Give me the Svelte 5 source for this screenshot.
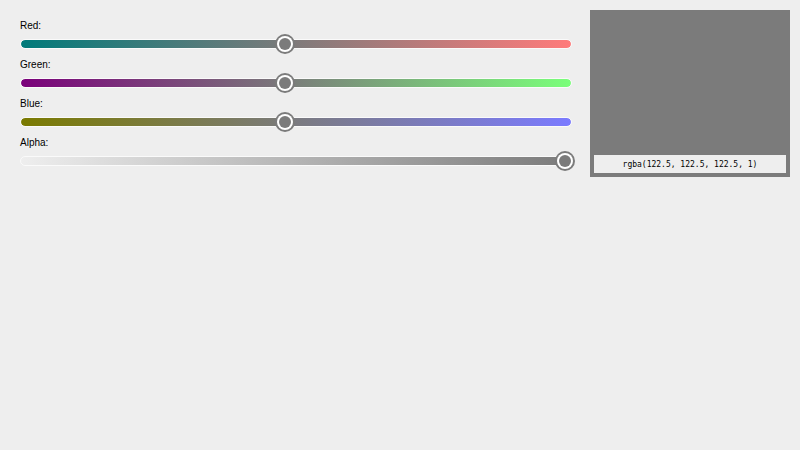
<script lang="ts">
  let color = $state({ red: 122.5, green: 122.5, blue: 122.5, alpha: 1 });

  const channels = [
    { key: "red", label: "Red", max: 255 },
    { key: "green", label: "Green", max: 255 },
    { key: "blue", label: "Blue", max: 255 },
    { key: "alpha", label: "Alpha", max: 1 },
  ] as const;

  const css = (c: typeof color) =>
    `rgba(${c.red}, ${c.green}, ${c.blue}, ${c.alpha})`;

  const current = $derived(css(color));
</script>

<main style="--current: {current}">
  <div class="sliders">
    {#each channels as { key, label, max }}
      <div class="channel">
        <label for={key}>{label}:</label>
        <input
          id={key}
          type="range"
          min="0"
          {max}
          step="any"
          bind:value={color[key]}
          style="--from: {css({ ...color, [key]: 0 })}; --to: {css({
            ...color,
            [key]: max,
          })}"
        />
      </div>
    {/each}
  </div>

  <div class="preview">
    <output>{current}</output>
  </div>
</main>

<style>
  :global(body) {
    margin: 0;
    background: #eee;
  }

  main {
    display: flex;
    gap: 18px;
    padding: 10px;
    font-family: "Liberation Sans", Arial, sans-serif;
    font-size: 10px;
  }

  .sliders {
    flex: 1;
    display: grid;
    gap: 8px;
    padding: 8px 0 11px 10px;
  }

  .channel {
    display: grid;
    gap: 6px;
  }

  label {
    font-size: 10px;
    line-height: 15px;
  }

  input {
    appearance: none;
    box-sizing: border-box;
    width: 100%;
    height: 10px;
    margin: 0;
    border: 1px solid #fafafa;
    border-radius: 5px;
    background: linear-gradient(to right, var(--from), var(--to)) padding-box;
  }

  input::-webkit-slider-thumb {
    appearance: none;
    width: 12px;
    height: 12px;
    border-radius: 50%;
    background: var(--current);
    box-shadow:
      0 0 0 2px #fff,
      0 0 0 4px var(--current);
    cursor: pointer;
  }

  .preview {
    box-sizing: border-box;
    display: flex;
    align-items: flex-end;
    width: 200px;
    padding: 4px;
    background: var(--current);
  }

  output {
    flex: 1;
    padding-top: 1px;
    background: #eee;
    font-family: "DejaVu Sans Mono", monospace;
    font-size: 8px;
    line-height: 17px;
    text-align: center;
  }
</style>
